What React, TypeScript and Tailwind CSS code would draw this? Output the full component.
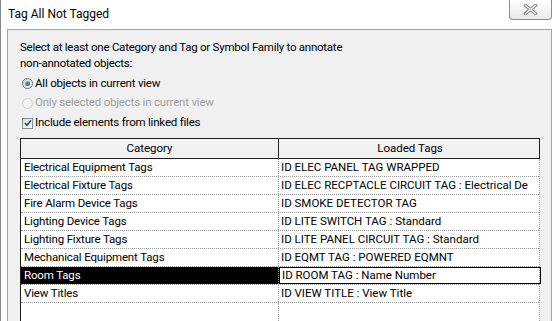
import React from 'react';

const rows = [
  { category: 'Electrical Equipment Tags', tag: 'ID ELEC PANEL TAG WRAPPED' },
  { category: 'Electrical Fixture Tags', tag: 'ID ELEC RECPTACLE CIRCUIT TAG : Electrical De' },
  { category: 'Fire Alarm Device Tags', tag: 'ID SMOKE DETECTOR TAG' },
  { category: 'Lighting Device Tags', tag: 'ID LITE SWITCH TAG : Standard' },
  { category: 'Lighting Fixture Tags', tag: 'ID LITE PANEL CIRCUIT TAG : Standard' },
  { category: 'Mechanical Equipment Tags', tag: 'ID EQMT TAG : POWERED EQMNT' },
  { category: 'Room Tags', tag: 'ID ROOM TAG : Name Number', selected: true },
  { category: 'View Titles', tag: 'ID VIEW TITLE : View Title' },
];

const Radio: React.FC<{ checked?: boolean; disabled?: boolean }> = ({ checked, disabled }) => (
  <span
    className={`w-[11px] h-[11px] rounded-full border flex items-center justify-center ${
      disabled ? 'border-[#cfcfcf] bg-[#f2f2f2]' : 'border-[#6f6f6f] bg-gradient-to-br from-[#d4d4d4] to-[#ffffff]'
    }`}
  >
    {checked && <span className="w-[5px] h-[5px] rounded-full bg-gradient-to-br from-[#7cc3ea] to-[#1a4f7c]" />}
  </span>
);

const Checkbox: React.FC = () => (
  <span className="w-[11px] h-[11px] border border-[#8e8f8f] bg-gradient-to-br from-[#dcdcdc] to-[#ffffff] flex items-center justify-center">
    <svg width="8" height="8" viewBox="0 0 8 8">
      <path d="M1 4 L3 6.3 L7 1.3" fill="none" stroke="#2a3f8a" strokeWidth="1.6" />
    </svg>
  </span>
);

export default function App() {
  return (
    <div className="w-[556px] h-[321px] overflow-hidden bg-white flex flex-col text-[11.5px] text-black font-['Roboto',sans-serif] border-l border-[#8a8a8a]">
      {/* title bar */}
      <div className="h-[29px] flex items-start justify-between shrink-0">
        <span className="ml-[7px] mt-[5px] text-[12px]">Tag All Not Tagged</span>
        <div className="mr-[4px] w-[43px] h-[20px] border border-t-0 border-[#8d8d8d] rounded-b-[4px] bg-gradient-to-b from-[#ffffff] to-[#e9e9e9] flex items-center justify-center">
          <svg width="15" height="11" viewBox="0 0 15 11">
            <path d="M2.5 1.5 L12.5 9.5 M12.5 1.5 L2.5 9.5" stroke="#8a8a8a" strokeWidth="3.4" strokeLinecap="square" />
            <path d="M2.5 1.5 L12.5 9.5 M12.5 1.5 L2.5 9.5" stroke="#ffffff" strokeWidth="1.3" strokeLinecap="square" />
          </svg>
        </div>
      </div>

      {/* client area */}
      <div className="flex-1 ml-[6px] mr-[4px] border border-b-0 border-[#a3a3a3] bg-[#f0f0f0] flex flex-col pl-[12px] pt-[9px]">
        <p className="leading-[16px] tracking-[-0.25px]">
          Select at least one Category and Tag or Symbol Family to annotate
          <br />
          non-annotated objects:
        </p>
        <div className="mt-[3px] ml-[2px] flex flex-col tracking-[-0.2px]">
          <label className="h-[19px] flex items-center gap-[2px]">
            <Radio checked />
            <span>All objects in current view</span>
          </label>
          <label className="h-[20px] flex items-center gap-[2px] text-[#a0a0a0]">
            <Radio disabled />
            <span>Only selected objects in current view</span>
          </label>
          <label className="h-[20px] flex items-center gap-[2px]">
            <Checkbox />
            <span>Include elements from linked files</span>
          </label>
        </div>

        {/* table */}
        <div className="mt-[5px] w-[520px] flex-1 bg-white border-l border-[#1e1e1e] flex flex-col">
          <div className="grid grid-cols-[258px_262px] h-[21px] border-t border-r border-b border-[#1e1e1e] bg-[#f2f2f2]">
            <div className="flex items-center justify-center border-r border-[#1e1e1e]">Category</div>
            <div className="flex items-center justify-center">Loaded Tags</div>
          </div>
          <div className="flex-1 flex flex-col border-r border-dotted border-[#9a9a9a]">
            {rows.map((r) => (
              <div key={r.category} className="grid grid-cols-[258px_262px] h-[18px] border-b border-dotted border-[#9a9a9a]">
                <div
                  className={`pl-[3px] flex items-center border-r border-dotted border-[#9a9a9a] whitespace-nowrap tracking-[-0.15px] ${
                    r.selected ? 'bg-black text-white' : ''
                  }`}
                >
                  {r.category}
                </div>
                <div
                  className={`pl-[2px] flex items-center whitespace-nowrap overflow-hidden ${
                    r.selected ? 'border border-black' : ''
                  }`}
                >
                  {r.tag}
                </div>
              </div>
            ))}
            <div className="flex-1 grid grid-cols-[258px_262px]">
              <div className="border-r border-dotted border-[#9a9a9a]" />
              <div />
            </div>
          </div>
        </div>
      </div>
    </div>
  );
}
